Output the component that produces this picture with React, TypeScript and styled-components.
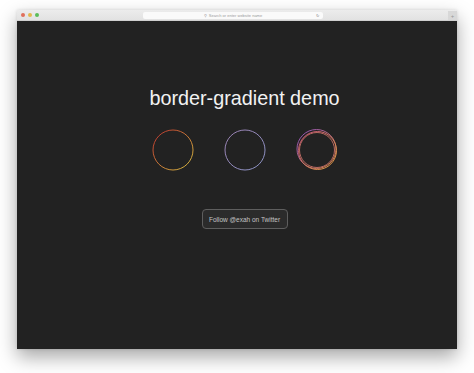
import React from "react";
import styled, { createGlobalStyle } from "styled-components";

const Global = createGlobalStyle`
  html, body { margin: 0; padding: 0; background: #fff; }
  body { font-family: "Liberation Sans", Arial, sans-serif; }
`;

const Page = styled.div`
  width: 474px;
  height: 373px;
  padding: 10px 17px 0 17px;
  box-sizing: border-box;
`;

const Window = styled.div`
  width: 440px;
  height: 339px;
  display: flex;
  flex-direction: column;
  box-shadow: 0 8px 18px rgba(0, 0, 0, 0.35), 0 0 3px rgba(0, 0, 0, 0.12);
`;

const TitleBar = styled.div`
  height: 11px;
  background: linear-gradient(#ececec, #e2e2e2);
  border-bottom: 1px solid #cfcfcf;
  display: flex;
  align-items: center;
  padding: 0 4px;
  position: relative;
  box-sizing: border-box;
`;

const Lights = styled.div`
  display: flex;
  gap: 3px;
`;

const Light = styled.span<{ $c: string }>`
  width: 4px;
  height: 4px;
  border-radius: 50%;
  background: ${(p) => p.$c};
`;

const Address = styled.div`
  position: absolute;
  left: 126px;
  width: 180px;
  top: 2px;
  height: 7px;
  background: #fafafa;
  border-radius: 2px;
  display: flex;
  align-items: center;
  justify-content: center;
  font-size: 4px;
  color: #9a9a9a;
  gap: 2px;
`;

const Reload = styled.span`
  position: absolute;
  right: 4px;
  font-size: 4px;
  color: #888;
`;

const Tab = styled.div`
  position: absolute;
  right: 0;
  top: 1px;
  width: 9px;
  height: 9px;
  background: #d8d8d8;
  color: #999;
  font-size: 6px;
  display: flex;
  align-items: center;
  justify-content: center;
`;

const Content = styled.div`
  flex: 1;
  background: #222222;
  display: flex;
  flex-direction: column;
  align-items: center;
  padding-top: 65px;
  padding-left: 15px;
`;

const Title = styled.h1`
  margin: 0;
  font-family: "Liberation Sans", Arial, sans-serif;
  font-weight: 400;
  font-size: 19.8px;
  line-height: 24px;
  color: #f2f2f2;
`;

const Rings = styled.div`
  display: flex;
  gap: 28px;
  margin-top: 18px;
`;

const Ring = styled.svg`
  width: 44px;
  height: 44px;
  display: block;
`;

const Button = styled.a`
  margin-top: 37px;
  display: flex;
  align-items: center;
  justify-content: center;
  width: 86px;
  height: 20px;
  box-sizing: border-box;
  border: 1px solid #5e5e5e;
  border-radius: 4px;
  background: #2b2b2b;
  color: #c4c4c4;
  font-size: 6.5px;
  text-decoration: none;
`;

export default function App() {
  return (
    <>
      <Global />
      <Page>
        <Window>
          <TitleBar>
            <Lights>
              <Light $c="#e0705c" />
              <Light $c="#e3b94c" />
              <Light $c="#5cbd5a" />
            </Lights>
            <Address>
              <span>⚲</span>
              <span>Search or enter website name</span>
              <Reload>↻</Reload>
            </Address>
            <Tab>+</Tab>
          </TitleBar>
          <Content>
            <Title>border-gradient demo</Title>
            <Rings>
              <Ring viewBox="0 0 44 44">
                <defs>
                  <linearGradient id="g1" x1="0" y1="0" x2="1" y2="1">
                    <stop offset="0" stopColor="#b8302e" />
                    <stop offset="1" stopColor="#d4bc40" />
                  </linearGradient>
                </defs>
                <circle cx="22" cy="22" r="20" fill="none" stroke="url(#g1)" strokeWidth="1" />
              </Ring>
              <Ring viewBox="0 0 44 44">
                <defs>
                  <linearGradient id="g2" x1="0" y1="0" x2="1" y2="1">
                    <stop offset="0" stopColor="#9a7fb0" />
                    <stop offset="1" stopColor="#8a94c4" />
                  </linearGradient>
                </defs>
                <circle cx="22" cy="22" r="20" fill="none" stroke="url(#g2)" strokeWidth="1" />
              </Ring>
              <Ring viewBox="0 0 44 44">
                <defs>
                  <linearGradient id="g3" x1="0" y1="0" x2="1" y2="1">
                    <stop offset="0" stopColor="#8a4ec0" />
                    <stop offset="1" stopColor="#e08a40" />
                  </linearGradient>
                  <linearGradient id="g4" x1="0" y1="0" x2="1" y2="1">
                    <stop offset="0" stopColor="#c04a80" />
                    <stop offset="1" stopColor="#e0a040" />
                  </linearGradient>
                </defs>
                <circle cx="21.5" cy="21" r="19.5" fill="none" stroke="url(#g3)" strokeWidth="1" />
                <circle cx="22.5" cy="22.5" r="19" fill="none" stroke="url(#g4)" strokeWidth="1" />
                <circle cx="22" cy="22" r="17.5" fill="none" stroke="#c87068" strokeWidth="0.9" />
              </Ring>
            </Rings>
            <Button href="#">Follow @exah on Twitter</Button>
          </Content>
        </Window>
      </Page>
    </>
  );
}
